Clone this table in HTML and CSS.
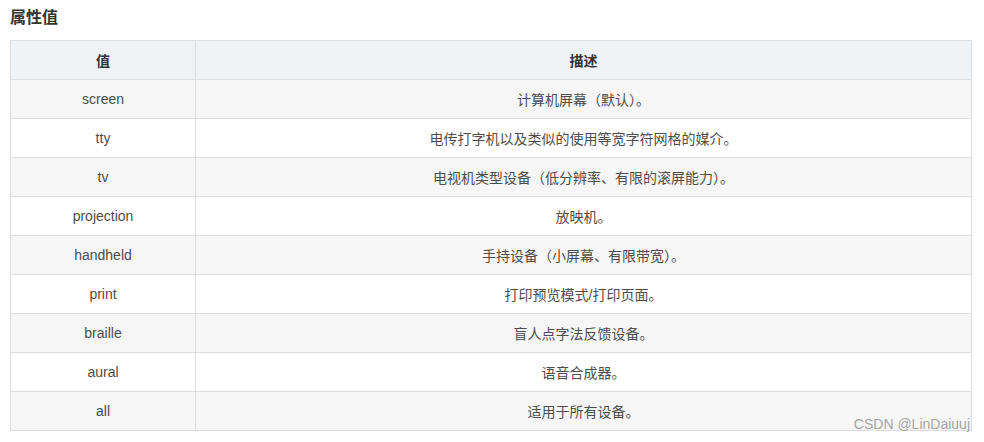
FILE: index.html
```html
<!DOCTYPE html>
<html lang="zh">
<head>
<meta charset="utf-8">
<title>属性值</title>
<link rel="stylesheet" href="styles.css">
</head>
<body>
<h3 class="title">属性值</h3>
<table class="attr-table">
  <thead>
    <tr><th class="col-value">值</th><th>描述</th></tr>
  </thead>
  <tbody>
    <tr><td>screen</td><td>计算机屏幕（默认）。</td></tr>
    <tr><td>tty</td><td>电传打字机以及类似的使用等宽字符网格的媒介。</td></tr>
    <tr><td>tv</td><td>电视机类型设备（低分辨率、有限的滚屏能力）。</td></tr>
    <tr><td>projection</td><td>放映机。</td></tr>
    <tr><td>handheld</td><td>手持设备（小屏幕、有限带宽）。</td></tr>
    <tr><td>print</td><td>打印预览模式/打印页面。</td></tr>
    <tr><td>braille</td><td>盲人点字法反馈设备。</td></tr>
    <tr><td>aural</td><td>语音合成器。</td></tr>
    <tr><td>all</td><td>适用于所有设备。</td></tr>
  </tbody>
</table>
<div class="watermark">CSDN @LinDaiuuj</div>
</body>
</html>
```
FILE: styles.css
```css
html, body {
  margin: 0;
  padding: 0;
  background: #fff;
}
body {
  padding: 0 10px;
  font-family: "Liberation Sans", Arial, "Noto Sans CJK SC", sans-serif;
  color: #4d4d4d;
  position: relative;
  height: 442px;
  box-sizing: border-box;
}
.title {
  margin: 6px 0 10px;
  font-size: 16px;
  line-height: 24px;
  font-weight: bold;
  color: #333;
}
.attr-table {
  border-collapse: collapse;
  width: 962px;
  font-size: 14px;
}
.attr-table th,
.attr-table td {
  border: 1px solid #ddd;
  height: 39px;
  padding: 0 8px;
  text-align: center;
  vertical-align: middle;
  box-sizing: border-box;
}
.attr-table th {
  background: #eff3f6;
  color: #333;
  font-weight: bold;
}
.attr-table .col-value {
  width: 185px;
}
.attr-table tbody tr:nth-child(odd) {
  background: #f6f6f6;
}
.attr-table tbody tr:nth-child(even) {
  background: #fff;
}
.watermark {
  position: absolute;
  right: 14px;
  top: 416px;
  font-size: 14px;
  line-height: 16px;
  color: #a5a5a5;
}
```
